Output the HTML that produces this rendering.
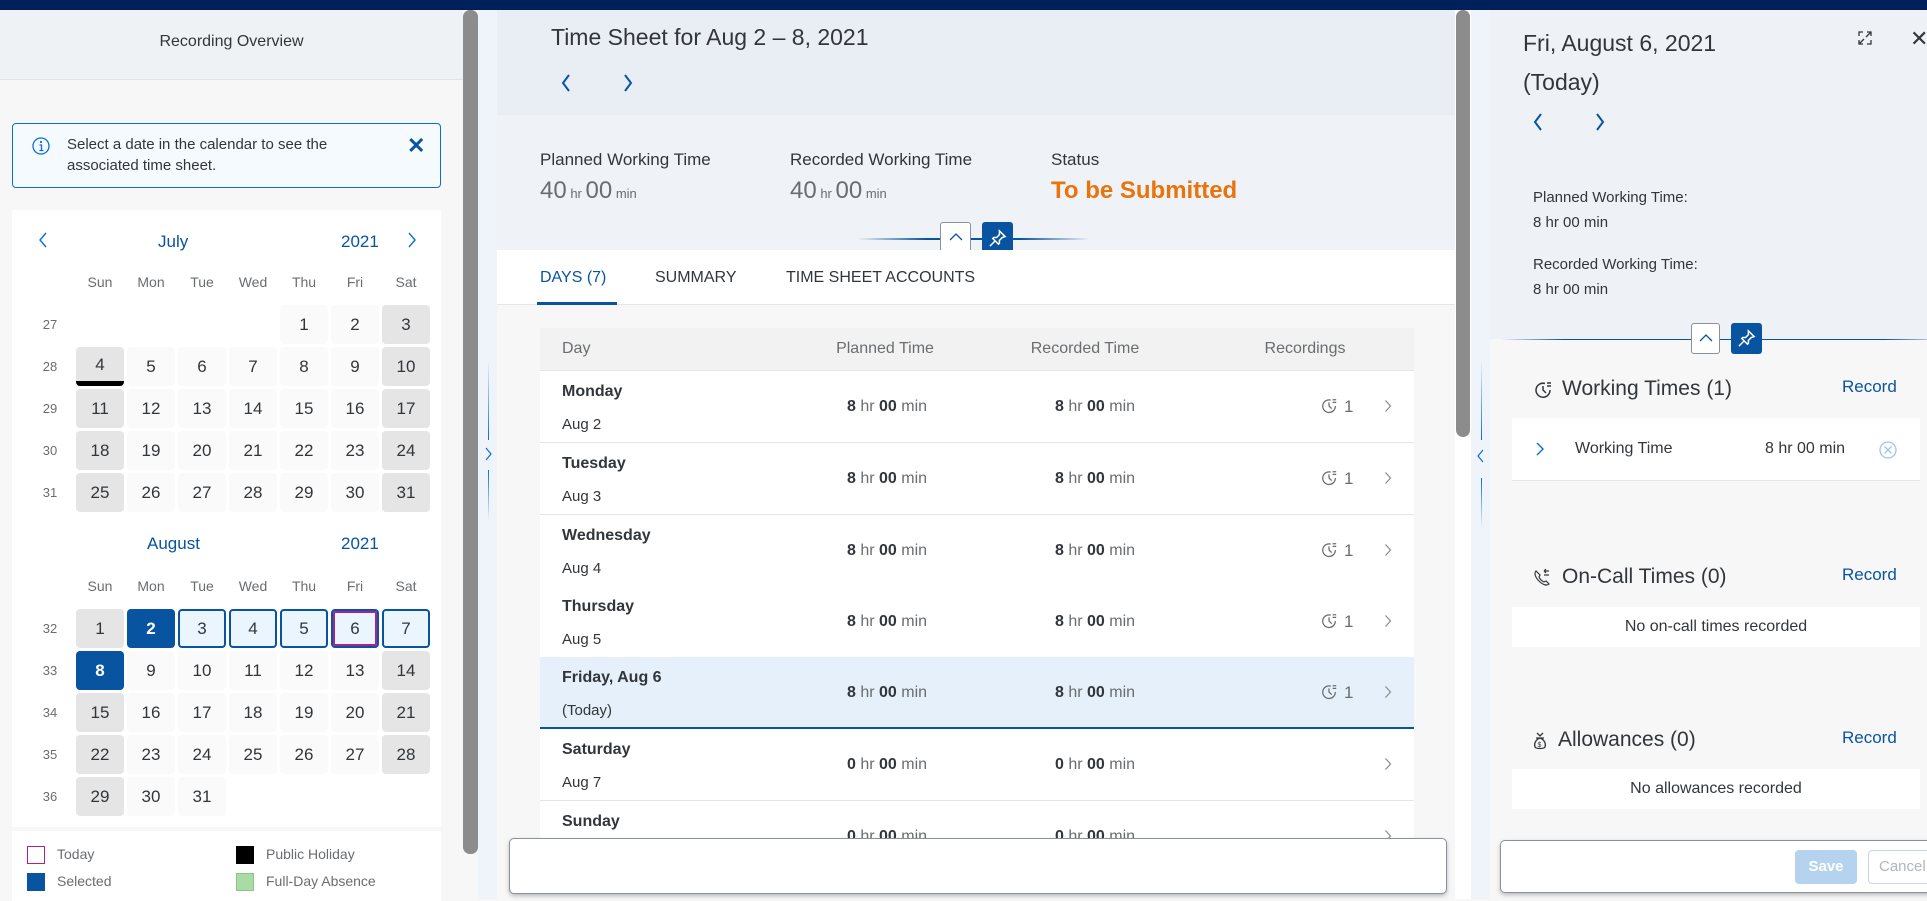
<!DOCTYPE html>
<html><head><meta charset="utf-8"><style>
*{box-sizing:border-box;margin:0;padding:0}
body{width:1927px;height:899px;overflow:hidden;position:relative;background:#f7f7f7;font-family:"Liberation Sans",sans-serif;color:#32363a}
.a{position:absolute}
.row{position:absolute;left:0;width:462px;height:39px}
.row .wk{position:absolute;left:38px;top:0;line-height:39px;font-size:13px;color:#6a6d70;width:24px;text-align:center}
.d{position:absolute;top:0;width:48px;height:39px;line-height:39px;text-align:center;font-size:17px;color:#32363a;background:#fafafa;border-radius:4px}
.d.w{background:#e5e5e5}
.d.s{background:#0854a0;color:#fff;font-weight:bold}
.d.r{background:#ebf5fe;border:2px solid #0854a0;line-height:35px}
.d.t{background:#ebf5fe;border:2px solid #0854a0;box-shadow:inset 0 0 0 2px #ab218e;line-height:35px}
.c0{left:76px}.c1{left:127px}.c2{left:178px}.c3{left:229px}.c4{left:280px}.c5{left:331px}.c6{left:382px}
.dn{position:absolute;font-size:14px;color:#6a6d70;width:48px;text-align:center}
.tr{position:absolute;left:540px;width:874px;height:72px;background:#fff;border-bottom:1px solid #e5e5e5}
.tr .n{position:absolute;left:22px;top:12px;font-size:16px;font-weight:bold;color:#32363a}
.tr .dt{position:absolute;left:22px;top:45px;font-size:15px;color:#32363a}
.tr .p{position:absolute;left:262px;width:170px;text-align:center;top:27px;font-size:16px;color:#6a6d70}
.tr .q{position:absolute;left:470px;width:170px;text-align:center;top:27px;font-size:16px;color:#6a6d70}
.tr b{color:#32363a}
.tr .rc{position:absolute;left:780px;top:26px;font-size:17px;color:#6a6d70}
.tr .ch{position:absolute;left:844px;top:28px}
.clk{display:inline-block;width:18px;height:18px;vertical-align:-3px;margin-right:6px}
</style></head><body>
<div class="a" style="left:0;top:0;width:1927px;height:10px;background:#00205b"></div>

<!-- LEFT PANEL -->
<div class="a" style="left:0;top:10px;width:463px;height:70px;background:#eff2f4;border-bottom:1px solid #dfe3e6;text-align:center;line-height:64px;font-size:16px;color:#32363a">Recording Overview</div>
<div class="a" style="left:12px;top:123px;width:429px;height:65px;background:#f5faff;border:1px solid #0a6ed1;border-radius:4px"></div>
<svg class="a" style="left:31px;top:136px" width="20" height="20" viewBox="0 0 20 20"><circle cx="10" cy="10" r="8" fill="none" stroke="#0a6ed1" stroke-width="1.3"/><circle cx="10" cy="6" r="1.1" fill="#0a6ed1"/><path d="M8.5 9h2v5.5M8.5 14.5h4" stroke="#0a6ed1" stroke-width="1.3" fill="none"/></svg>
<div class="a" style="left:67px;top:134px;font-size:15px;color:#32363a;line-height:21px">Select a date in the calendar to see the<br>associated time sheet.</div>
<div class="a" style="left:407px;top:133px;font-size:22px;font-weight:bold;color:#0854a0">✕</div>

<div class="a" style="left:12px;top:210px;width:429px;height:617px;background:#fff"></div>
<svg class="a" style="left:38px;top:232px" width="10" height="16" viewBox="0 0 10 16"><path d="M8 1L2 8l6 7" fill="none" stroke="#0a6ed1" stroke-width="1.4"/></svg>
<div class="a" style="left:158px;top:232px;font-size:17px;color:#0854a0">July</div>
<div class="a" style="left:341px;top:232px;font-size:17px;color:#0854a0">2021</div>
<svg class="a" style="left:407px;top:232px" width="10" height="16" viewBox="0 0 10 16"><path d="M2 1l6 7-6 7" fill="none" stroke="#0a6ed1" stroke-width="1.4"/></svg>
<div class="a" style="left:0;top:274px;width:462px;height:18px">
<div class="dn c0">Sun</div><div class="dn c1">Mon</div><div class="dn c2">Tue</div><div class="dn c3">Wed</div><div class="dn c4">Thu</div><div class="dn c5">Fri</div><div class="dn c6">Sat</div></div>
<div class="row" style="top:305px"><div class="wk">27</div><div class="d c4">1</div><div class="d c5">2</div><div class="d c6 w">3</div></div>
<div class="row" style="top:347px"><div class="wk">28</div><div class="d c0 w" style="border-bottom:5px solid #000;line-height:36px">4</div><div class="d c1">5</div><div class="d c2">6</div><div class="d c3">7</div><div class="d c4">8</div><div class="d c5">9</div><div class="d c6 w">10</div></div>
<div class="row" style="top:389px"><div class="wk">29</div><div class="d c0 w">11</div><div class="d c1">12</div><div class="d c2">13</div><div class="d c3">14</div><div class="d c4">15</div><div class="d c5">16</div><div class="d c6 w">17</div></div>
<div class="row" style="top:431px"><div class="wk">30</div><div class="d c0 w">18</div><div class="d c1">19</div><div class="d c2">20</div><div class="d c3">21</div><div class="d c4">22</div><div class="d c5">23</div><div class="d c6 w">24</div></div>
<div class="row" style="top:473px"><div class="wk">31</div><div class="d c0 w">25</div><div class="d c1">26</div><div class="d c2">27</div><div class="d c3">28</div><div class="d c4">29</div><div class="d c5">30</div><div class="d c6 w">31</div></div>

<div class="a" style="left:147px;top:534px;font-size:17px;color:#0854a0">August</div>
<div class="a" style="left:341px;top:534px;font-size:17px;color:#0854a0">2021</div>
<div class="a" style="left:0;top:578px;width:462px;height:18px">
<div class="dn c0">Sun</div><div class="dn c1">Mon</div><div class="dn c2">Tue</div><div class="dn c3">Wed</div><div class="dn c4">Thu</div><div class="dn c5">Fri</div><div class="dn c6">Sat</div></div>
<div class="row" style="top:609px"><div class="wk">32</div><div class="d c0 w">1</div><div class="d c1 s">2</div><div class="d c2 r">3</div><div class="d c3 r">4</div><div class="d c4 r">5</div><div class="d c5 t">6</div><div class="d c6 r">7</div></div>
<div class="row" style="top:651px"><div class="wk">33</div><div class="d c0 s">8</div><div class="d c1">9</div><div class="d c2">10</div><div class="d c3">11</div><div class="d c4">12</div><div class="d c5">13</div><div class="d c6 w">14</div></div>
<div class="row" style="top:693px"><div class="wk">34</div><div class="d c0 w">15</div><div class="d c1">16</div><div class="d c2">17</div><div class="d c3">18</div><div class="d c4">19</div><div class="d c5">20</div><div class="d c6 w">21</div></div>
<div class="row" style="top:735px"><div class="wk">35</div><div class="d c0 w">22</div><div class="d c1">23</div><div class="d c2">24</div><div class="d c3">25</div><div class="d c4">26</div><div class="d c5">27</div><div class="d c6 w">28</div></div>
<div class="row" style="top:777px"><div class="wk">36</div><div class="d c0 w">29</div><div class="d c1">30</div><div class="d c2">31</div></div>

<div class="a" style="left:12px;top:831px;width:429px;height:70px;background:#fff"></div>
<div class="a" style="left:27px;top:846px;width:18px;height:18px;border:1px solid #ab218e;background:#fff"></div>
<div class="a" style="left:57px;top:846px;font-size:14px;color:#6a6d70">Today</div>
<div class="a" style="left:27px;top:873px;width:18px;height:18px;background:#0854a0"></div>
<div class="a" style="left:57px;top:873px;font-size:14px;color:#6a6d70">Selected</div>
<div class="a" style="left:236px;top:846px;width:18px;height:18px;background:#000"></div>
<div class="a" style="left:266px;top:846px;font-size:14px;color:#6a6d70">Public Holiday</div>
<div class="a" style="left:236px;top:873px;width:18px;height:18px;background:#a9dba5;border:1px solid #8cc489"></div>
<div class="a" style="left:266px;top:873px;font-size:14px;color:#6a6d70">Full-Day Absence</div>

<div class="a" style="left:463px;top:10px;width:15px;height:844px;background:#8c8c8c;border-radius:7px"></div>

<!-- MIDDLE -->
<div class="a" style="left:478px;top:10px;width:19px;height:889px;background:#eef4fa"></div>
<div class="a" style="left:488px;top:360px;width:1px;height:80px;background:linear-gradient(#eef4fa,#0a6ed1)"></div>
<div class="a" style="left:488px;top:470px;width:1px;height:50px;background:linear-gradient(#0a6ed1,#eef4fa)"></div>
<svg class="a" style="left:484px;top:446px" width="9" height="16" viewBox="0 0 9 16"><path d="M2 2l5 6-5 6" fill="none" stroke="#0a6ed1" stroke-width="1.2"/></svg>
<div class="a" style="left:497px;top:10px;width:958px;height:105px;background:#e8eef4"></div>
<div class="a" style="left:551px;top:24px;font-size:23px;color:#32363a">Time Sheet for Aug 2 – 8, 2021</div>
<svg class="a" style="left:560px;top:73px" width="12" height="20" viewBox="0 0 12 20"><path d="M9 2L3 10l6 8" fill="none" stroke="#0854a0" stroke-width="2"/></svg>
<svg class="a" style="left:622px;top:73px" width="12" height="20" viewBox="0 0 12 20"><path d="M3 2l6 8-6 8" fill="none" stroke="#0854a0" stroke-width="2"/></svg>
<div class="a" style="left:497px;top:115px;width:958px;height:135px;background:#eff3f7"></div>
<div class="a" style="left:540px;top:150px;font-size:17px;color:#32363a">Planned Working Time</div>
<div class="a" style="left:540px;top:177px;font-size:24px;color:#6a6d70">40<span style="font-size:13px"> hr </span> 00<span style="font-size:13px"> min</span></div>
<div class="a" style="left:790px;top:150px;font-size:17px;color:#32363a">Recorded Working Time</div>
<div class="a" style="left:790px;top:177px;font-size:24px;color:#6a6d70">40<span style="font-size:13px"> hr </span> 00<span style="font-size:13px"> min</span></div>
<div class="a" style="left:1051px;top:150px;font-size:17px;color:#32363a">Status</div>
<div class="a" style="left:1051px;top:177px;font-size:24px;font-weight:bold;color:#e9730c">To be Submitted</div>
<div class="a" style="left:857px;top:238px;width:233px;height:2px;background:linear-gradient(90deg,rgba(8,84,160,0),#0854a0 30%,#0854a0 70%,rgba(8,84,160,0))"></div>
<div class="a" style="left:940px;top:222px;width:31px;height:32px;background:#fff;border:1px solid #89919a;border-radius:3px"></div>
<svg class="a" style="left:948px;top:232px" width="16" height="10" viewBox="0 0 16 10"><path d="M2 8l6-6 6 6" fill="none" stroke="#0854a0" stroke-width="1.3"/></svg>
<div class="a" style="left:982px;top:222px;width:31px;height:32px;background:#0854a0;border-radius:3px"></div>
<svg class="a" style="left:988px;top:229px" width="19" height="19" viewBox="0 0 20 20"><path d="M12 2l6 6-3 1-3 3 0 3-1 1-6-6 1-1 3 0 3-3z M7 13l-5 5" fill="none" stroke="#fff" stroke-width="1.6"/></svg>
<div class="a" style="left:497px;top:250px;width:958px;height:55px;background:#fff;border-bottom:1px solid #e5e5e5"></div>
<div class="a" style="left:540px;top:269px;font-size:16px;color:#0854a0">DAYS (7)</div>
<div class="a" style="left:537px;top:302px;width:80px;height:3px;background:#0854a0"></div>
<div class="a" style="left:655px;top:269px;font-size:16px;color:#32363a">SUMMARY</div>
<div class="a" style="left:786px;top:269px;font-size:16px;color:#32363a">TIME SHEET ACCOUNTS</div>

<div class="a" style="left:540px;top:328px;width:874px;height:43px;background:#f2f2f2;border-bottom:1px solid #e5e5e5"></div>
<div class="a" style="left:562px;top:340px;font-size:16px;color:#6a6d70">Day</div>
<div class="a" style="left:800px;width:170px;text-align:center;top:340px;font-size:16px;color:#6a6d70">Planned Time</div>
<div class="a" style="left:1000px;width:170px;text-align:center;top:340px;font-size:16px;color:#6a6d70">Recorded Time</div>
<div class="a" style="left:1220px;width:170px;text-align:center;top:340px;font-size:16px;color:#6a6d70">Recordings</div>

<div class="tr" style="top:371px"><div class="n">Monday</div><div class="dt">Aug 2</div><div class="p"><b>8</b> hr <b>00</b> min</div><div class="q"><b>8</b> hr <b>00</b> min</div><div class="rc"><svg class="clk" viewBox="0 0 20 20"><path d="M12 3.5A7 7 0 1 0 17 10M10 6v4l3 3M14 3h4M14 6h4" fill="none" stroke="#6a6d70" stroke-width="1.4"/></svg>1</div><svg class="ch" width="8" height="14" viewBox="0 0 8 14"><path d="M1.5 1.5L6.5 7l-5 5.5" fill="none" stroke="#8a8b8c" stroke-width="1.2"/></svg></div>
<div class="tr" style="top:443px"><div class="n">Tuesday</div><div class="dt">Aug 3</div><div class="p"><b>8</b> hr <b>00</b> min</div><div class="q"><b>8</b> hr <b>00</b> min</div><div class="rc"><svg class="clk" viewBox="0 0 20 20"><path d="M12 3.5A7 7 0 1 0 17 10M10 6v4l3 3M14 3h4M14 6h4" fill="none" stroke="#6a6d70" stroke-width="1.4"/></svg>1</div><svg class="ch" width="8" height="14" viewBox="0 0 8 14"><path d="M1.5 1.5L6.5 7l-5 5.5" fill="none" stroke="#8a8b8c" stroke-width="1.2"/></svg></div>
<div class="tr" style="top:515px"><div class="n">Wednesday</div><div class="dt">Aug 4</div><div class="p"><b>8</b> hr <b>00</b> min</div><div class="q"><b>8</b> hr <b>00</b> min</div><div class="rc"><svg class="clk" viewBox="0 0 20 20"><path d="M12 3.5A7 7 0 1 0 17 10M10 6v4l3 3M14 3h4M14 6h4" fill="none" stroke="#6a6d70" stroke-width="1.4"/></svg>1</div><svg class="ch" width="8" height="14" viewBox="0 0 8 14"><path d="M1.5 1.5L6.5 7l-5 5.5" fill="none" stroke="#8a8b8c" stroke-width="1.2"/></svg></div>
<div class="tr" style="top:586px"><div class="n">Thursday</div><div class="dt">Aug 5</div><div class="p"><b>8</b> hr <b>00</b> min</div><div class="q"><b>8</b> hr <b>00</b> min</div><div class="rc"><svg class="clk" viewBox="0 0 20 20"><path d="M12 3.5A7 7 0 1 0 17 10M10 6v4l3 3M14 3h4M14 6h4" fill="none" stroke="#6a6d70" stroke-width="1.4"/></svg>1</div><svg class="ch" width="8" height="14" viewBox="0 0 8 14"><path d="M1.5 1.5L6.5 7l-5 5.5" fill="none" stroke="#8a8b8c" stroke-width="1.2"/></svg></div>
<div class="tr" style="top:657px;background:#e5f0fa;border-bottom:2px solid #0854a0"><div class="n">Friday, Aug 6</div><div class="dt">(Today)</div><div class="p"><b>8</b> hr <b>00</b> min</div><div class="q"><b>8</b> hr <b>00</b> min</div><div class="rc"><svg class="clk" viewBox="0 0 20 20"><path d="M12 3.5A7 7 0 1 0 17 10M10 6v4l3 3M14 3h4M14 6h4" fill="none" stroke="#6a6d70" stroke-width="1.4"/></svg>1</div><svg class="ch" width="8" height="14" viewBox="0 0 8 14"><path d="M1.5 1.5L6.5 7l-5 5.5" fill="none" stroke="#8a8b8c" stroke-width="1.2"/></svg></div>
<div class="tr" style="top:729px"><div class="n">Saturday</div><div class="dt">Aug 7</div><div class="p"><b>0</b> hr <b>00</b> min</div><div class="q"><b>0</b> hr <b>00</b> min</div><svg class="ch" width="8" height="14" viewBox="0 0 8 14"><path d="M1.5 1.5L6.5 7l-5 5.5" fill="none" stroke="#8a8b8c" stroke-width="1.2"/></svg></div>
<div class="tr" style="top:801px"><div class="n">Sunday</div><div class="dt">Aug 8</div><div class="p"><b>0</b> hr <b>00</b> min</div><div class="q"><b>0</b> hr <b>00</b> min</div><svg class="ch" width="8" height="14" viewBox="0 0 8 14"><path d="M1.5 1.5L6.5 7l-5 5.5" fill="none" stroke="#8a8b8c" stroke-width="1.2"/></svg></div>
<div class="a" style="left:509px;top:838px;width:938px;height:56px;background:#fff;border:1px solid #89919a;border-radius:5px;box-shadow:0 2px 4px rgba(0,0,0,.25)"></div>

<div class="a" style="left:1455px;top:10px;width:16px;height:889px;background:#fff"></div>
<div class="a" style="left:1456px;top:10px;width:14px;height:427px;background:#8c8c8c;border-radius:7px"></div>

<!-- RIGHT -->
<div class="a" style="left:1471px;top:10px;width:19px;height:889px;background:#eef4fa"></div>
<div class="a" style="left:1481px;top:360px;width:1px;height:80px;background:linear-gradient(#eef4fa,#0a6ed1)"></div>
<div class="a" style="left:1481px;top:478px;width:1px;height:50px;background:linear-gradient(#0a6ed1,#eef4fa)"></div>
<svg class="a" style="left:1476px;top:448px" width="9" height="16" viewBox="0 0 9 16"><path d="M7 2L2 8l5 6" fill="none" stroke="#0a6ed1" stroke-width="1.2"/></svg>
<div class="a" style="left:1490px;top:10px;width:437px;height:329px;background:#eef2f6"></div>
<div class="a" style="left:1523px;top:24px;font-size:23px;color:#32363a;line-height:39px">Fri, August 6, 2021<br>(Today)</div>
<svg class="a" style="left:1856px;top:29px" width="18" height="18" viewBox="0 0 18 18"><path d="M3 7V3h4M11 3h4v4M15 11v4h-4M7 15H3v-4M10 8l5-5M8 10l-5 5" fill="none" stroke="#32363a" stroke-width="1.3"/></svg>
<div class="a" style="left:1910px;top:26px;font-size:22px;color:#32363a">✕</div>
<svg class="a" style="left:1532px;top:112px" width="12" height="20" viewBox="0 0 12 20"><path d="M9 2L3 10l6 8" fill="none" stroke="#0854a0" stroke-width="2"/></svg>
<svg class="a" style="left:1594px;top:112px" width="12" height="20" viewBox="0 0 12 20"><path d="M3 2l6 8-6 8" fill="none" stroke="#0854a0" stroke-width="2"/></svg>
<div class="a" style="left:1533px;top:185px;font-size:15px;color:#32363a;line-height:25px">Planned Working Time:<br>8 hr 00 min</div>
<div class="a" style="left:1533px;top:252px;font-size:15px;color:#32363a;line-height:25px">Recorded Working Time:<br>8 hr 00 min</div>
<div class="a" style="left:1490px;top:339px;width:437px;height:560px;background:#f7f7f7"></div>
<div class="a" style="left:1500px;top:339px;width:427px;height:1px;background:linear-gradient(90deg,rgba(8,84,160,0),#0854a0 15%,#0854a0 90%,rgba(8,84,160,.3))"></div>
<div class="a" style="left:1691px;top:323px;width:29px;height:31px;background:#fff;border:1px solid #89919a;border-radius:3px"></div>
<svg class="a" style="left:1698px;top:333px" width="16" height="10" viewBox="0 0 16 10"><path d="M2 8l6-6 6 6" fill="none" stroke="#0854a0" stroke-width="1.3"/></svg>
<div class="a" style="left:1731px;top:323px;width:31px;height:31px;background:#0854a0;border-radius:3px"></div>
<svg class="a" style="left:1737px;top:329px" width="19" height="19" viewBox="0 0 20 20"><path d="M12 2l6 6-3 1-3 3 0 3-1 1-6-6 1-1 3 0 3-3z M7 13l-5 5" fill="none" stroke="#fff" stroke-width="1.6"/></svg>

<svg class="a" style="left:1533px;top:380px" width="20" height="20" viewBox="0 0 20 20"><path d="M12 3.5A7 7 0 1 0 17 10M10 6v4l3 3M14 3h4M14 6h4" fill="none" stroke="#32363a" stroke-width="1.5"/></svg>
<div class="a" style="left:1562px;top:377px;font-size:21px;color:#32363a">Working Times (1)</div>
<div class="a" style="left:1842px;top:377px;font-size:17px;color:#0854a0">Record</div>
<div class="a" style="left:1512px;top:418px;width:408px;height:63px;background:#fff;border-bottom:1px solid #e5e5e5"></div>
<svg class="a" style="left:1535px;top:441px" width="10" height="16" viewBox="0 0 10 16"><path d="M2 2l6 6-6 6" fill="none" stroke="#0a6ed1" stroke-width="1.4"/></svg>
<div class="a" style="left:1575px;top:440px;font-size:16px;color:#32363a">Working Time</div>
<div class="a" style="left:1765px;top:440px;font-size:16px;color:#32363a">8 hr 00 min</div>
<svg class="a" style="left:1878px;top:440px" width="20" height="20" viewBox="0 0 20 20"><circle cx="10" cy="10" r="8" fill="none" stroke="#9ec4ea" stroke-width="1.3"/><path d="M6.5 6.5l7 7M13.5 6.5l-7 7" stroke="#9ec4ea" stroke-width="1.3"/></svg>

<svg class="a" style="left:1532px;top:568px" width="20" height="20" viewBox="0 0 20 20"><path d="M4 3c-2 2-1 6 3 10s8 5 10 3l-3-3-2 1c-2-1-4-3-5-5l1-2z M12 3h5M12 3l2-2M12 3l2 2M12 7h5" fill="none" stroke="#32363a" stroke-width="1.2"/></svg>
<div class="a" style="left:1562px;top:565px;font-size:21px;color:#32363a">On-Call Times (0)</div>
<div class="a" style="left:1842px;top:565px;font-size:17px;color:#0854a0">Record</div>
<div class="a" style="left:1512px;top:607px;width:408px;height:40px;background:#fff;text-align:center;line-height:40px;font-size:16px;color:#32363a">No on-call times recorded</div>

<svg class="a" style="left:1532px;top:731px" width="16" height="20" viewBox="0 0 16 20"><path d="M5 2l3 3 3-3M4 7h8M8 7C3 9 2 13 3 16c1 2 9 2 10 0 1-3 0-7-5-9" fill="none" stroke="#32363a" stroke-width="1.3"/><text x="5.5" y="16" font-size="7" font-family="Liberation Sans" fill="#32363a">$</text></svg>
<div class="a" style="left:1558px;top:728px;font-size:21px;color:#32363a">Allowances (0)</div>
<div class="a" style="left:1842px;top:728px;font-size:17px;color:#0854a0">Record</div>
<div class="a" style="left:1512px;top:769px;width:408px;height:40px;background:#fff;text-align:center;line-height:40px;font-size:16px;color:#32363a">No allowances recorded</div>

<div class="a" style="left:1500px;top:840px;width:440px;height:53px;background:#fff;border:1px solid #89919a;border-radius:5px;box-shadow:0 2px 4px rgba(0,0,0,.25)"></div>
<div class="a" style="left:1795px;top:850px;width:62px;height:34px;background:#b5d3ee;border-radius:4px;text-align:center;line-height:34px;font-size:15px;font-weight:bold;color:#fff">Save</div>
<div class="a" style="left:1868px;top:850px;width:80px;height:34px;background:#fff;border:1px solid #c8d5e2;border-radius:4px;line-height:32px;padding-left:10px;font-size:15px;color:#b0b6bd">Cancel</div>
</body></html>
